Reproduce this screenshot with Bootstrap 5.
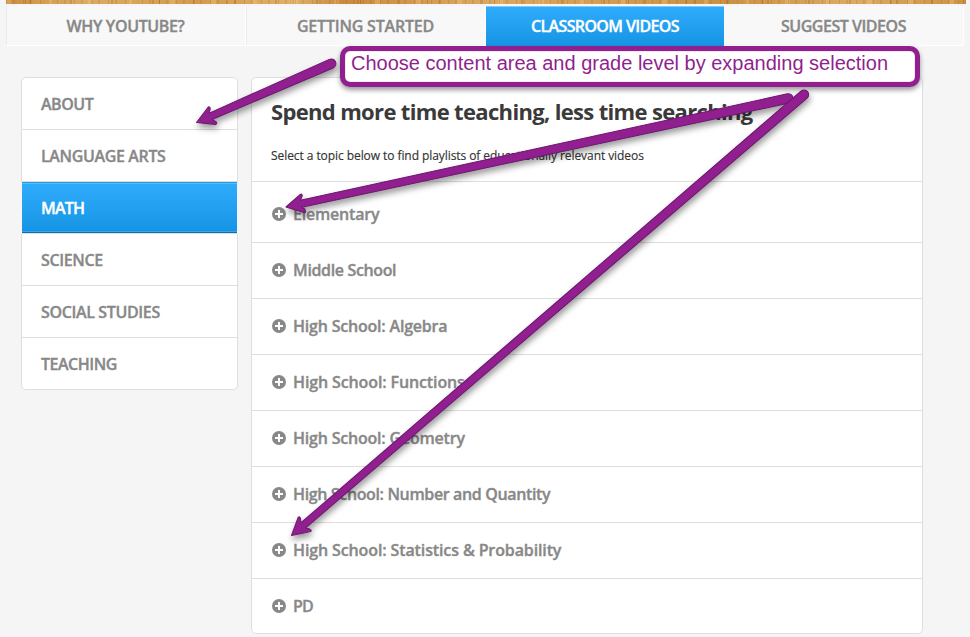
<!DOCTYPE html>
<html lang="en">
<head>
<meta charset="utf-8">
<meta name="viewport" content="width=device-width, initial-scale=1">
<title>Classroom Videos</title>
<link rel="stylesheet" href="https://cdn.jsdelivr.net/npm/bootstrap@5.3.0/dist/css/bootstrap.min.css">
<style>
  body { background: #f5f5f5; font-family: "Trebuchet MS", "Open Sans", sans-serif; color: #333; width: 970px; height: 637px; }
  .wood { height: 4px; margin: 0 4px 0 6px;
    background:
      repeating-linear-gradient(90deg, rgba(120,66,10,.16) 0 1px, transparent 1px 7px, rgba(120,66,10,.12) 7px 9px, transparent 9px 17px),
      repeating-linear-gradient(90deg, rgba(255,225,160,.22) 0 5px, transparent 5px 23px, rgba(130,75,20,.2) 23px 25px, transparent 25px 41px),
      repeating-linear-gradient(90deg, transparent 0 19px, rgba(130,75,20,.3) 19px 20px, transparent 20px 67px),
      linear-gradient(90deg, #c98f42, #dcab64 8%, #d39b4c 20%, #e0b06a 30%, #c98a40 35%, #dca860 50%, #d6a056 60%, #cb9145 75%, #dcaa62 88%, #cc9347); }
  .top-tabs { margin: 2px 6px 0; height: 40px; }
  .top-tabs .nav-link { width: 240px; height: 40px; padding: 0; line-height: 41px; font-size: 16px; font-weight: 600; color: #888;
    background: #f8f8f8; border: 0 solid #fff; border-width: 0 1px 1px 0; box-shadow: inset 1px 0 #ebebeb; border-radius: 0; }
  .top-tabs .nav-link.active { width: 238px; color: #fff; border: 0; background: linear-gradient(#30acfc, #1694e4); box-shadow: inset 0 1px #83cafb; }
  .top-tabs .nav-link.active + .nav-link { box-shadow: none; }
  .top-tabs, .side-menu, .topic { -webkit-text-stroke: .35px; }
  .page-body { padding: 31px 0 0 21px; gap: 13px; }
  .side-menu { width: 217px; --bs-list-group-border-radius: 5px; }
  .side-menu .list-group-item { height: 52px; padding: 0 19px; line-height: 53px; font-size: 16px; font-weight: 600; color: #888; border-color: #dedede; }
  .side-menu .list-group-item:first-child { height: 53px; line-height: 52px; }
  .side-menu .list-group-item.active { height: 51px; margin: 0 1px 1px; color: #fff; border: 0; border-bottom: 1px solid #0f6fae; background: linear-gradient(#30acfc, #1694e4);
    box-shadow: 0 1px #dedede, inset 0 1px #1f9bec, inset 0 2px #5bbcfb, inset 0 -1px #36a5ee; }
  .topic-card { width: 672px; height: 557px; border: 1px solid #dedede; border-radius: 5px; }
  .topic-head { height: 103px; padding: 19px 19px 0; }
  .topic-head h1 { font-size: 22px; font-weight: 700; line-height: 28px; letter-spacing: -.66px; color: #3a3a3a; margin: 0 0 22px; white-space: nowrap; }
  .topic-head p { font-size: 12px; line-height: 18px; letter-spacing: -.07px; -webkit-text-stroke: .15px; }
  .topic { height: 56px; padding: 0 20px 2px; gap: 7px; border-top: 1px solid #dedede; font-size: 16px; font-weight: 600; color: #888; white-space: nowrap; }
  .topic:first-child { height: 61px; padding-top: 5px; }
  .t12 { letter-spacing: -.12px } .t20 { letter-spacing: -.2px } .t36 { letter-spacing: -.36px }
  .t48 { letter-spacing: -.48px } .t64 { letter-spacing: -.64px } .t80 { letter-spacing: -.8px }
  .callout { left: 340px; top: 46px; width: 580px; height: 41px; border: 5px solid #911f90; border-radius: 10px; background: #fff;
    box-shadow: 0 3px 5px rgba(0,0,0,.4), inset 0 0 1px #911f90; padding-left: 6px; color: #911f90; font: 20px/25px "Liberation Sans", sans-serif; white-space: nowrap; }
  .arrows { left: 0; top: 0; filter: drop-shadow(1px 4px 3px rgba(0,0,0,.4)); }
</style>
</head>
<body class="position-relative overflow-hidden">
<svg class="d-none">
  <symbol id="plus" viewBox="0 0 14 14"><circle cx="7" cy="7" r="7" fill="#888"/><path d="M7 3v8M3 7h8" stroke="#fff" stroke-width="2"/></symbol>
</svg>
<div class="wood"></div>
<nav class="nav top-tabs flex-nowrap text-center">
  <a class="nav-link t36" href="#">WHY YOUTUBE?</a>
  <a class="nav-link t20" href="#">GETTING STARTED</a>
  <a class="nav-link active t64" href="#">CLASSROOM VIDEOS</a>
  <a class="nav-link t48" href="#">SUGGEST VIDEOS</a>
</nav>
<main class="d-flex align-items-start page-body">
  <div class="list-group side-menu flex-shrink-0">
    <a class="list-group-item t48" href="#">ABOUT</a>
    <a class="list-group-item t36" href="#">LANGUAGE ARTS</a>
    <a class="list-group-item active t80" href="#">MATH</a>
    <a class="list-group-item t36" href="#">SCIENCE</a>
    <a class="list-group-item t36" href="#">SOCIAL STUDIES</a>
    <a class="list-group-item t48" href="#">TEACHING</a>
  </div>
  <section class="bg-white topic-card flex-shrink-0">
    <header class="topic-head">
      <h1>Spend more time teaching, less time searching</h1>
      <p class="mb-0">Select a topic below to find playlists of educationally relevant videos</p>
    </header>
    <div>
      <div class="topic d-flex align-items-center t20"><svg width="14" height="14"><use href="#plus"/></svg>Elementary</div>
      <div class="topic d-flex align-items-center t36"><svg width="14" height="14"><use href="#plus"/></svg>Middle School</div>
      <div class="topic d-flex align-items-center t20"><svg width="14" height="14"><use href="#plus"/></svg>High School: Algebra</div>
      <div class="topic d-flex align-items-center t12"><svg width="14" height="14"><use href="#plus"/></svg>High School: Functions</div>
      <div class="topic d-flex align-items-center t20"><svg width="14" height="14"><use href="#plus"/></svg>High School: Geometry</div>
      <div class="topic d-flex align-items-center t36"><svg width="14" height="14"><use href="#plus"/></svg>High School: Number and Quantity</div>
      <div class="topic d-flex align-items-center t12"><svg width="14" height="14"><use href="#plus"/></svg>High School: Statistics &amp; Probability</div>
      <div class="topic d-flex align-items-center t80"><svg width="14" height="14"><use href="#plus"/></svg>PD</div>
    </div>
  </section>
</main>
<div class="callout position-absolute">Choose content area and grade level by expanding selection</div>
<svg class="arrows position-absolute" width="970" height="637" fill="#911f90" stroke="#6c176f" stroke-width="1" stroke-linejoin="round">
  <path transform="translate(196.500 122.500) rotate(-23.600)" d="M0 0L17-9.500Q19-9.500 18-7L15.500-3.500L147-4.700A4.700 4.700 0 0 1 147 4.700L15.500 3.500L18 7Q19 9.500 17 9.500Z"/>
  <path transform="translate(286 207) rotate(-12.200)" d="M0 0L17-9.500Q19-9.500 18-7L15.500-3.500L514-4.700A4.700 4.700 0 0 1 514 4.700L15.500 3.500L18 7Q19 9.500 17 9.500Z"/>
  <path transform="translate(291.500 535.500) rotate(-40.700)" d="M0 0L17-9.500Q19-9.500 18-7L15.500-3.500L676-4.700A4.700 4.700 0 0 1 676 4.700L15.500 3.500L18 7Q19 9.500 17 9.500Z"/>
</svg>
<script src="https://cdn.jsdelivr.net/npm/bootstrap@5.3.0/dist/js/bootstrap.bundle.min.js"></script>
</body>
</html>
